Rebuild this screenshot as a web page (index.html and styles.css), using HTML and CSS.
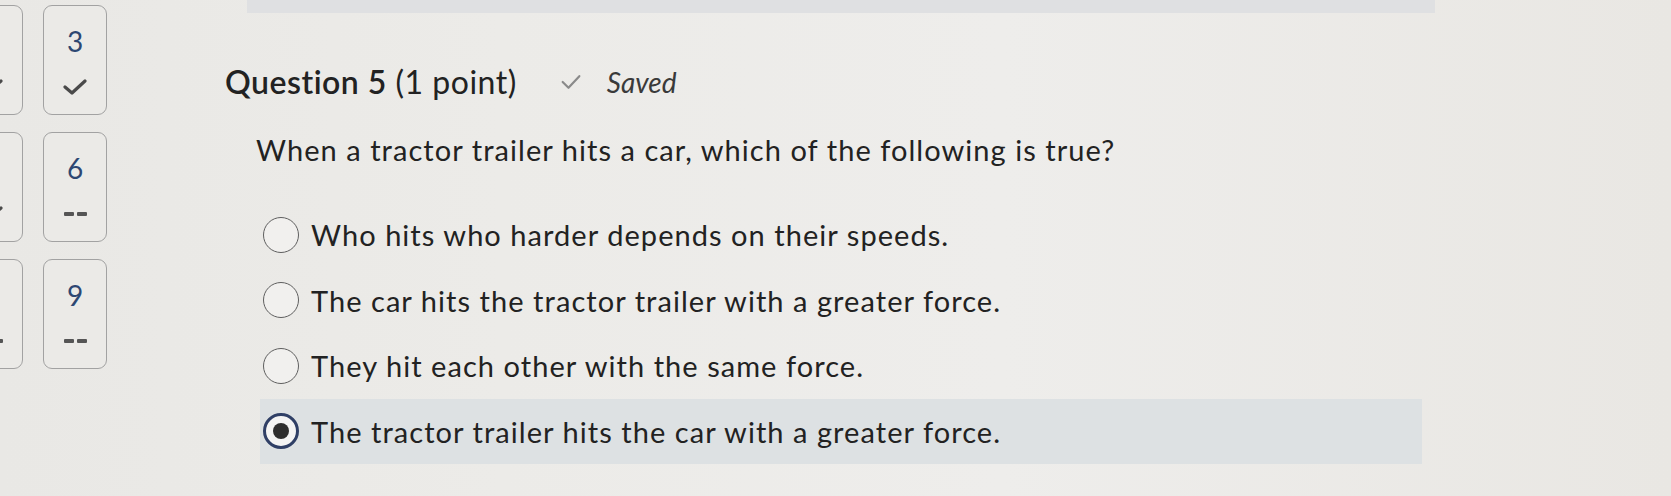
FILE: index.html
```html
<!DOCTYPE html>
<html lang="en">
<head>
<meta charset="utf-8">
<title>Question 5</title>
<link rel="stylesheet" href="styles.css">
</head>
<body>
<div class="topbar"></div>
<div class="page">
  <nav class="sidebar">
    <div class="col col-left">
      <div class="card"><span class="num">2</span><span class="ind"><svg class="chk" viewBox="0 0 24 16"><path d="M2 8 L9 14 L22 2"/></svg></span></div>
      <div class="card"><span class="num">5</span><span class="ind"><svg class="chk" viewBox="0 0 24 16"><path d="M2 8 L9 14 L22 2"/></svg></span></div>
      <div class="card"><span class="num">8</span><span class="ind"><span class="dash"></span><span class="dash"></span></span></div>
    </div>
    <div class="col">
      <div class="card"><span class="num">3</span><span class="ind"><svg class="chk" viewBox="0 0 24 16"><path d="M2 8 L9 14 L22 2"/></svg></span></div>
      <div class="card"><span class="num">6</span><span class="ind" aria-label="--"><span class="dash"></span><span class="dash"></span></span></div>
      <div class="card"><span class="num">9</span><span class="ind" aria-label="--"><span class="dash"></span><span class="dash"></span></span></div>
    </div>
  </nav>
  <main class="question">
    <header class="q-head">
      <h2 class="q-title"><span class="q-num">Question 5</span> <span class="q-pts">(1 point)</span></h2>
      <span class="saved"><svg class="saved-chk" viewBox="0 0 24 18"><path d="M2 9 L9 16 L22 2"/></svg><span class="saved-txt">Saved</span></span>
    </header>
    <p class="q-text">When a tractor trailer hits a car, which of the following is true?</p>
    <ul class="options">
      <li class="opt"><span class="radio"></span><span class="opt-txt">Who hits who harder depends on their speeds.</span></li>
      <li class="opt"><span class="radio"></span><span class="opt-txt">The car hits the tractor trailer with a greater force.</span></li>
      <li class="opt"><span class="radio"></span><span class="opt-txt">They hit each other with the same force.</span></li>
      <li class="opt opt-selected"><span class="radio radio-on"></span><span class="opt-txt">The tractor trailer hits the car with a greater force.</span></li>
    </ul>
  </main>
</div>
</body>
</html>
```

FILE: styles.css
```css
* { box-sizing: border-box; }
html, body {
  margin: 0;
  padding: 0;
  width: 1671px;
  height: 496px;
  overflow: hidden;
}
body {
  font-family: Lato, "Open Sans", "Liberation Sans", sans-serif;
  color: #2b2b2b;
  background: linear-gradient(90deg, #e9e8e5 0%, #ecebe8 30%, #eeedeb 60%, #e9e7e3 100%);
}
.topbar {
  position: absolute;
  top: 0;
  left: 247px;
  width: 1188px;
  height: 13px;
  background: #dfe0e2;
}
.page {
  display: flex;
  align-items: flex-start;
}
.sidebar {
  display: flex;
  gap: 20px;
  margin-left: -41px;
  padding-top: 5px;
}
.col {
  display: flex;
  flex-direction: column;
  gap: 17px;
}
.card {
  width: 64px;
  height: 110px;
  border: 1.5px solid #a2a2a2;
  border-radius: 9px;
  display: flex;
  flex-direction: column;
  align-items: center;
  padding-top: 19px;
  background: #ebeae7;
}
.num {
  font-size: 28px;
  line-height: 32px;
  color: #2d4772;
}
.ind {
  margin-top: 21px;
  height: 18px;
  display: flex;
  align-items: center;
  justify-content: center;
  gap: 3px;
}
.chk {
  width: 24px;
  height: 16px;
  fill: none;
  stroke: #4a4a4a;
  stroke-width: 3.2;
  stroke-linecap: round;
  stroke-linejoin: round;
}
.dash {
  width: 10px;
  height: 4px;
  border-radius: 1px;
  background: #555;
}
.question {
  margin-left: 118px;
  padding-top: 62px;
  flex: 1;
}
.q-head {
  display: flex;
  align-items: center;
  height: 40px;
}
.q-title {
  margin: 0;
  font-size: 32px;
  font-weight: 400;
  line-height: 40px;
  letter-spacing: 0.5px;
  color: #222;
}
.q-num { font-weight: 600; }
.saved {
  display: flex;
  align-items: center;
  margin-left: 44px;
}
.saved-chk {
  width: 20px;
  height: 16px;
  fill: none;
  stroke: #8a8a8a;
  stroke-width: 2.6;
  stroke-linecap: round;
  stroke-linejoin: round;
}
.saved-txt {
  margin-left: 26px;
  font-style: italic;
  font-size: 28px;
  color: #3a3a3a;
}
.q-text {
  margin: 30px 0 0 31px;
  font-size: 29px;
  letter-spacing: 1.05px;
  line-height: 36px;
  color: #222;
}
.options {
  list-style: none;
  margin: 34px 0 0 35px;
  padding: 0;
  width: 1162px;
}
.opt {
  height: 65.5px;
  display: flex;
  align-items: center;
  padding-left: 3px;
}
.opt-selected {
  background: #dde1e3;
}
.radio {
  width: 36px;
  height: 36px;
  border-radius: 50%;
  border: 1.6px solid #5f5f5f;
  background: #f1f0ee;
  flex: none;
  display: flex;
  align-items: center;
  justify-content: center;
}
.radio-on {
  border: 3px solid #2f3f66;
  background: #f4f4f4;
}
.radio-on::after {
  content: "";
  width: 16px;
  height: 16px;
  border-radius: 50%;
  background: #2e2e2e;
}
.opt-txt {
  margin-left: 12px;
  font-size: 29px;
  letter-spacing: 1.05px;
  color: #222;
}
```
